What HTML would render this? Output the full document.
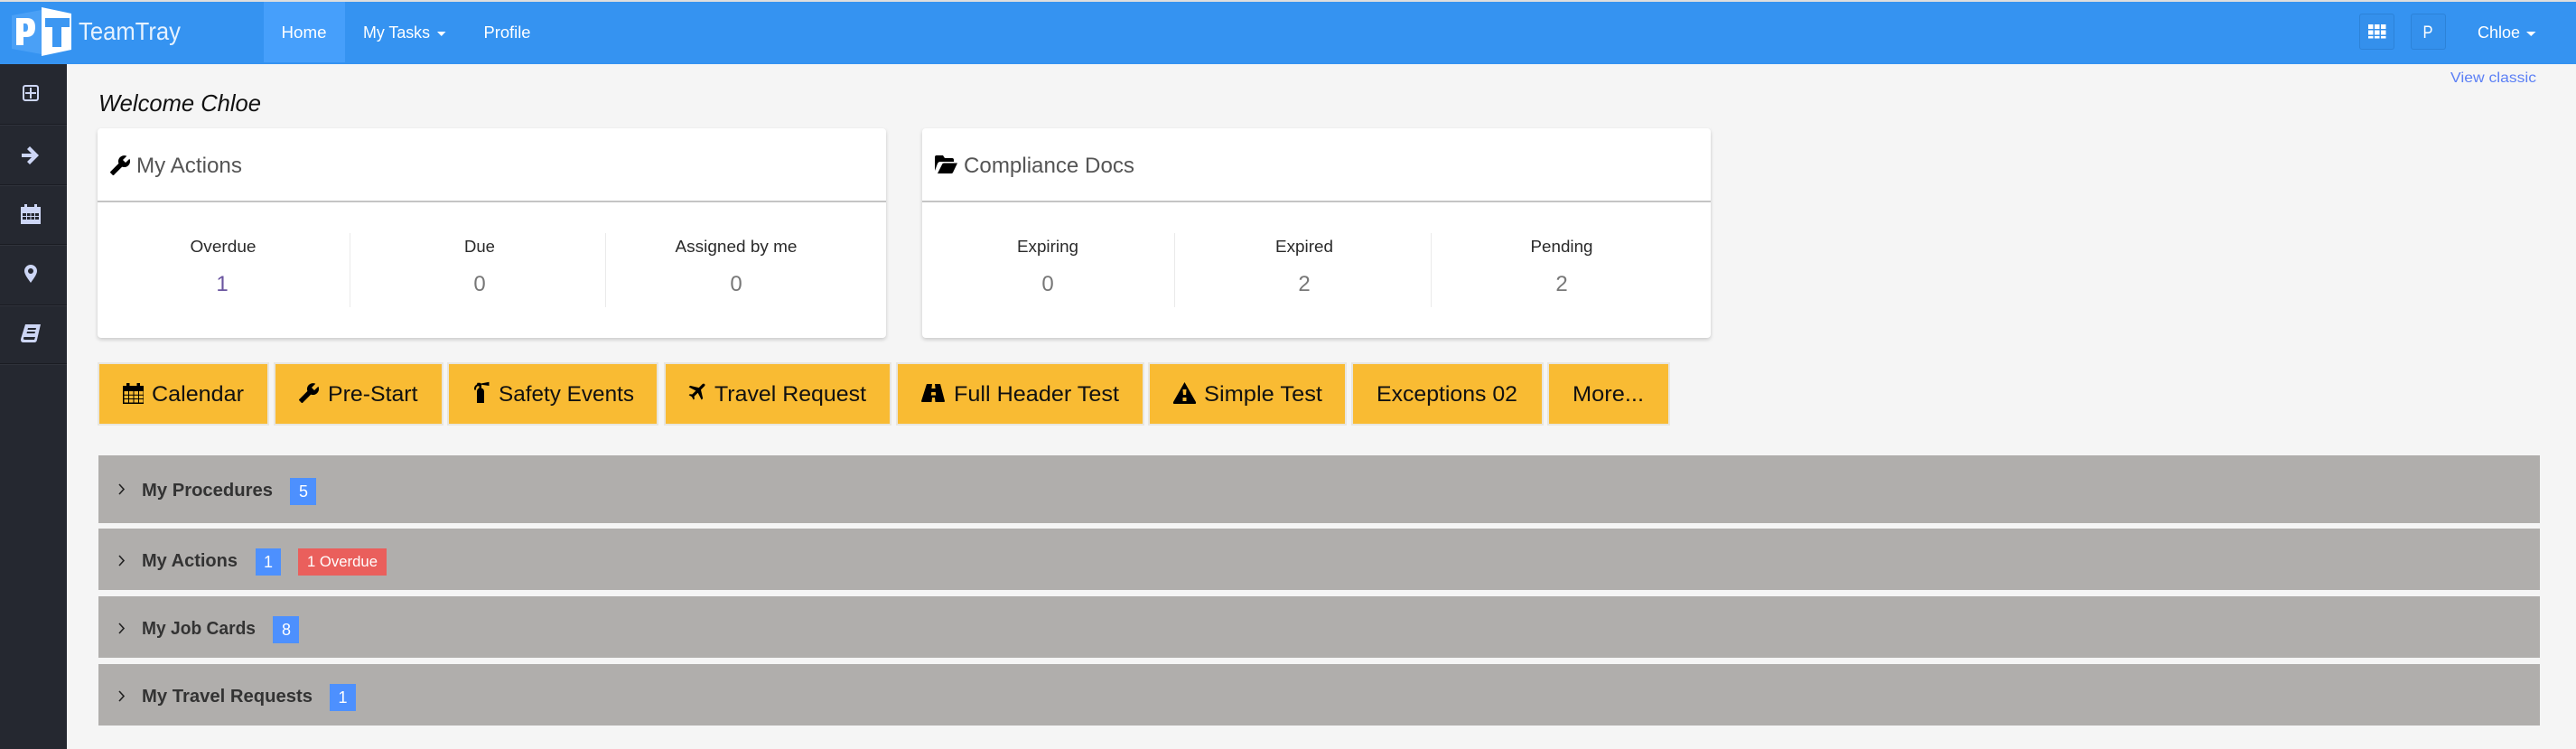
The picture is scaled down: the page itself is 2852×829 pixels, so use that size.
<!DOCTYPE html>
<html lang="en">
<head>
<meta charset="utf-8">
<title>TeamTray</title>
<style>
html,body{margin:0;padding:0;width:2852px;height:829px;overflow:hidden;background:#f5f5f5}
.b{position:absolute;box-sizing:border-box}
svg{position:absolute;left:0;top:0}
text{font-family:"Liberation Sans",sans-serif}
.btn{background:#f9bb33;border:2px solid #e8e6e0;top:401px;height:70px}
.acc{background:#b0aeac;left:109px;width:2703px}
.card{background:#fff;top:142px;height:232px;border-radius:4px;box-shadow:0 2px 4px rgba(0,0,0,.18)}
.bdg{background:#4d90fe;height:30px}
.dv{background:#eaeaea;width:1px;top:258px;height:82px}
.sd{background:#1a1c22;left:0;width:74px;height:1px;box-shadow:0 1px 0 #30333b}
</style>
</head>
<body>
<div class="b" style="left:0;top:0;width:2852px;height:2px;background:#dedede"></div>
<div class="b" style="left:0;top:2px;width:2852px;height:69px;background:#3593f1"></div>
<div class="b" style="left:292px;top:2px;width:90px;height:67px;background:#469ffb"></div>
<div class="b" style="left:0;top:71px;width:74px;height:758px;background:#252830"></div>
<div class="b sd" style="top:137px"></div>
<div class="b sd" style="top:204px"></div>
<div class="b sd" style="top:270px"></div>
<div class="b sd" style="top:337px"></div>
<div class="b sd" style="top:402px"></div>
<div class="b" style="left:2612px;top:15px;width:39px;height:40px;background:#3490ec;border:1px solid #2c82d8;border-radius:3px"></div>
<div class="b" style="left:2669px;top:15px;width:39px;height:40px;background:#3490ec;border:1px solid #2c82d8;border-radius:3px"></div>

<div class="b card" style="left:108px;width:873px"></div>
<div class="b" style="left:108px;top:222px;width:873px;height:2px;background:#c4c4c4"></div>
<div class="b dv" style="left:387px"></div>
<div class="b dv" style="left:670px"></div>
<div class="b card" style="left:1021px;width:873px"></div>
<div class="b" style="left:1021px;top:222px;width:873px;height:2px;background:#c4c4c4"></div>
<div class="b dv" style="left:1300px"></div>
<div class="b dv" style="left:1584px"></div>

<div class="b btn" style="left:108px;width:190px"></div>
<div class="b btn" style="left:303px;width:188px"></div>
<div class="b btn" style="left:495px;width:234px"></div>
<div class="b btn" style="left:735px;width:252px"></div>
<div class="b btn" style="left:992px;width:275px"></div>
<div class="b btn" style="left:1271px;width:220px"></div>
<div class="b btn" style="left:1496px;width:213px"></div>
<div class="b btn" style="left:1713px;width:136px"></div>

<div class="b acc" style="top:504px;height:75px"></div>
<div class="b acc" style="top:585px;height:68px"></div>
<div class="b acc" style="top:660px;height:68px"></div>
<div class="b acc" style="top:735px;height:68px"></div>
<div class="b bdg" style="left:321px;top:529px;width:29px"></div>
<div class="b bdg" style="left:283px;top:607px;width:28px"></div>
<div class="b bdg" style="left:330px;top:607px;width:98px;background:#ea5f5c"></div>
<div class="b bdg" style="left:302px;top:682px;width:29px"></div>
<div class="b bdg" style="left:365px;top:757px;width:29px"></div>

<svg width="2852" height="829" viewBox="0 0 2852 829" xmlns="http://www.w3.org/2000/svg">
<!-- logo -->
<path d="M13 17 46 11V60L13 54Z" fill="#4aa0f6"/>
<path d="M46 8 79 15V55L46 62Z" fill="#fff"/>
<path d="M18 20H30Q39 20 39 30 39 41 29 41H26V50H18ZM26 26V35H28Q31 35 31 30.500 31 26 28 26Z" fill="#fff" fill-rule="evenodd"/>
<path d="M50 20H77V30H68V52H58V30H50Z" fill="#3c97f2"/>
<g fill="#fff">
<text x="87" y="44" font-size="28" textLength="113" lengthAdjust="spacingAndGlyphs" fill="#e6f2fe">TeamTray</text>
<text x="311.500" y="42" font-size="18" textLength="50" lengthAdjust="spacingAndGlyphs">Home</text>
<text x="402" y="42" font-size="18" textLength="74" lengthAdjust="spacingAndGlyphs">My Tasks</text>
<path d="M484 35h9.500l-4.750 5z"/>
<text x="535.500" y="42" font-size="18" textLength="52" lengthAdjust="spacingAndGlyphs">Profile</text>
<text x="2743" y="42" font-size="18" textLength="47" lengthAdjust="spacingAndGlyphs">Chloe</text>
<path d="M2797 35h10.500l-5.250 5z"/>
<text x="2682.500" y="42" font-size="19" textLength="11" lengthAdjust="spacingAndGlyphs">P</text>
<path d="M2622 27h5.500v5h-5.500zM2629 27h5.500v5h-5.500zM2636 27h5.500v5h-5.500zM2622 33.500h5.500v5h-5.500zM2629 33.500h5.500v5h-5.500zM2636 33.500h5.500v5h-5.500zM2622 40h5.500v2.500h-5.500zM2629 40h5.500v2.500h-5.500zM2636 40h5.500v2.500h-5.500z"/>
</g>
<text x="2713" y="91" font-size="16" textLength="95" lengthAdjust="spacingAndGlyphs" fill="#5c80f5">View classic</text>

<!-- sidebar icons -->
<g fill="#cdd6f5">
<path fill-rule="evenodd" d="M28 94h12a3 3 0 0 1 3 3v12a3 3 0 0 1-3 3H28a3 3 0 0 1-3-3V97a3 3 0 0 1 3-3zm0 2a1 1 0 0 0-1 1v12a1 1 0 0 0 1 1h12a1 1 0 0 0 1-1V97a1 1 0 0 0-1-1z"/>
<path d="M33 97h2v5h5v2h-5v5h-2v-5h-5v-2h5z"/>
<path d="M33 162l10 10-10 10-3-3 5-5H24v-4h11l-5-5z"/>
<path fill-rule="evenodd" d="M23 229h4v-3h3v3h8v-3h3v3h4v19H23zm2 7v3h4v-3zm5 0v3h3.500v-3zm4.500 0v3h3.500v-3zm4.500 0v3h4v-3zm-14 4v3h4v-3zm5 0v3h3.500v-3zm4.500 0v3h3.500v-3zm4.500 0v3h4v-3z"/>
<path fill-rule="evenodd" d="M34 293a7 7 0 0 1 7 7c0 4-5 10-7 13-2-3-7-9-7-13a7 7 0 0 1 7-7zm0 4a3 3 0 1 0 0 6 3 3 0 0 0 0-6z"/>
<path fill-rule="evenodd" d="M28 359h17l-4 17q-.5 3-3 3H26q-3 0-3-3 0-1 1-4zm3 4-.5 2h9l.5-2zm-1 4-.5 2h9l.5-2zM27 373q-1 0-1 1.500t1.500 1.500H38l1-3z"/>
</g>

<text x="109" y="123" font-size="26" font-style="italic" textLength="180" lengthAdjust="spacingAndGlyphs" fill="#111">Welcome Chloe</text>

<!-- card 1 -->
<path transform="translate(145 171) scale(-1 1)" d="M22.700 19l-9.100-9.100c.9-2.300.4-5-1.500-6.900-2-2-5-2.400-7.400-1.300L9 6 6 9 1.600 4.700C.4 7.100.9 10.100 2.900 12.100c1.900 1.900 4.600 2.400 6.900 1.500l9.100 9.100c.4.400 1 .4 1.400 0l2.300-2.300c.5-.4.500-1.100.1-1.400z" fill="#000"/>
<g fill="#555">
<text x="151" y="191" font-size="24" textLength="117" lengthAdjust="spacingAndGlyphs">My Actions</text>
<text x="1067" y="191" font-size="24" textLength="189" lengthAdjust="spacingAndGlyphs">Compliance Docs</text>
</g>
<g fill="#2a2a2a" font-size="18" text-anchor="middle">
<text x="247" y="279" textLength="73" lengthAdjust="spacingAndGlyphs">Overdue</text>
<text x="531" y="279" textLength="34" lengthAdjust="spacingAndGlyphs">Due</text>
<text x="815" y="279" textLength="135" lengthAdjust="spacingAndGlyphs">Assigned by me</text>
<text x="1160" y="279" textLength="68" lengthAdjust="spacingAndGlyphs">Expiring</text>
<text x="1444" y="279" textLength="64" lengthAdjust="spacingAndGlyphs">Expired</text>
<text x="1729" y="279" textLength="69" lengthAdjust="spacingAndGlyphs">Pending</text>
</g>
<g font-size="24" text-anchor="middle" fill="#777">
<text x="246" y="322" fill="#6a55a0">1</text>
<text x="531" y="322">0</text>
<text x="815" y="322">0</text>
<text x="1160" y="322">0</text>
<text x="1444" y="322">2</text>
<text x="1729" y="322">2</text>
</g>
<!-- folder -->
<path d="M1035 189v-15a2 2 0 0 1 2-2h7l2 3h8a2 2 0 0 1 2 2v2h-15q-2 0-3 2zM1038 192l5-10q.5-1.500 2.500-1.500H1060l-5 10.500q-.5 1-2.500 1z" fill="#000"/>

<!-- buttons -->
<g fill="#111" font-size="24">
<text x="168" y="444" textLength="102" lengthAdjust="spacingAndGlyphs">Calendar</text>
<text x="363" y="444" textLength="99.500" lengthAdjust="spacingAndGlyphs">Pre-Start</text>
<text x="552" y="444" textLength="150" lengthAdjust="spacingAndGlyphs">Safety Events</text>
<text x="791" y="444" textLength="168" lengthAdjust="spacingAndGlyphs">Travel Request</text>
<text x="1056" y="444" textLength="183" lengthAdjust="spacingAndGlyphs">Full Header Test</text>
<text x="1333" y="444" textLength="131" lengthAdjust="spacingAndGlyphs">Simple Test</text>
<text x="1524" y="444" textLength="156" lengthAdjust="spacingAndGlyphs">Exceptions 02</text>
<text x="1741" y="444" textLength="79" lengthAdjust="spacingAndGlyphs">More...</text>
</g>
<g fill="#000">
<!-- calendar -->
<path fill-rule="evenodd" d="M136 427h4v-3h3.500v3h8v-3h3.500v3h4v20h-23zm1.500 6v3.700h4.500V433zm5.500 0v3.700h4.500V433zm5.500 0v3.700h4.500V433zm5.500 0v3.700h4.500V433zm-16.500 4.700v3.300h4.500v-3.300zm5.500 0v3.300h4.500v-3.300zm5.500 0v3.300h4.500v-3.300zm5.500 0v3.300h4.500v-3.300zm-16.500 4.300v3.500h4.500V442zm5.500 0v3.500h4.500V442zm5.500 0v3.500h4.500V442zm5.500 0v3.500h4.500V442z"/>
<!-- wrench -->
<path transform="translate(354 423) scale(-1 1)" d="M22.700 19l-9.100-9.100c.9-2.300.4-5-1.500-6.900-2-2-5-2.400-7.400-1.300L9 6 6 9 1.600 4.700C.4 7.100.9 10.100 2.900 12.100c1.900 1.900 4.600 2.400 6.900 1.500l9.100 9.100c.4.400 1 .4 1.400 0l2.300-2.300c.5-.4.500-1.100.1-1.400z"/>
<!-- extinguisher -->
<path d="M528 433.500q0-3 2.500-4v-2.200h-1.800q-2 1.500-1.700 4.200h-2q-.3-4.500 2.900-6l.6-1.700h3l1 .7 9-1.700v4.200l-8.500-1.200v3.700q3 1 3 4V446h-8z"/>
<!-- plane -->
<path transform="translate(761 420) rotate(45 12 12) scale(1.050)" d="M21 16v-2l-8-5V3.500c0-.83-.67-1.500-1.500-1.500S10 2.670 10 3.500V9l-8 5v2l8-2.500V19l-2 1.500V22l3.500-1 3.500 1v-1.500L13 19v-5.500l8 2.500z"/>
<!-- road -->
<path fill-rule="evenodd" d="M1026 425h6l-.6 5h4.200l-.6-5h6l5 19q0 1-1 1h-9.500l-.5-5h-3l-.5 5H1021q-1 0-1-1zm5.200 9-.4 3.500h5.400l-.4-3.500z"/>
<!-- warning -->
<path fill-rule="evenodd" d="M1311.500 423l12.500 22q.5 2-1 2h-23q-1.500 0-1-2zm-2 8 .4 6h3.200l.4-6zm0 9v4h4v-4z"/>
</g>

<!-- accordion -->
<g fill="none" stroke="#222" stroke-width="1.600">
<path d="M132 536l5 5.500-5 5.500"/>
<path d="M132 615l5 5.500-5 5.500"/>
<path d="M132 690l5 5.500-5 5.500"/>
<path d="M132 765l5 5.500-5 5.500"/>
</g>
<g fill="#333" font-size="20" font-weight="bold">
<text x="157" y="549" textLength="145" lengthAdjust="spacingAndGlyphs">My Procedures</text>
<text x="157" y="627" textLength="106" lengthAdjust="spacingAndGlyphs">My Actions</text>
<text x="157" y="702" textLength="126" lengthAdjust="spacingAndGlyphs">My Job Cards</text>
<text x="157" y="777" textLength="189" lengthAdjust="spacingAndGlyphs">My Travel Requests</text>
</g>
<g fill="#fff" font-size="18" text-anchor="middle">
<text x="336" y="550">5</text>
<text x="297" y="628">1</text>
<text x="317" y="703">8</text>
<text x="379.500" y="778">1</text>
<text x="379" y="627" font-size="17" textLength="78" lengthAdjust="spacingAndGlyphs">1 Overdue</text>
</g>
</svg>
</body>
</html>
